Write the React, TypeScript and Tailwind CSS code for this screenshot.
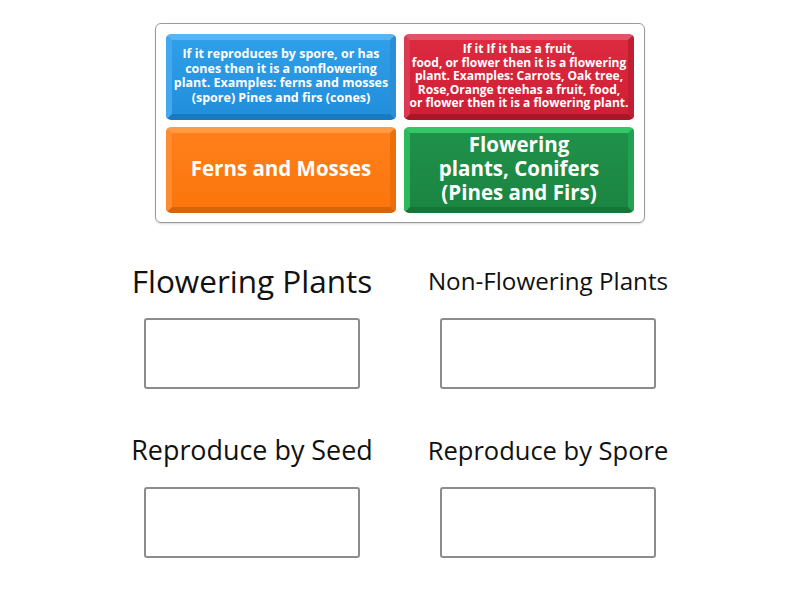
const tiles = [
  {
    lines: [
      "If it reproduces by spore, or has",
      "cones then it is a nonflowering",
      "plant. Examples: ferns and mosses",
      "(spore) Pines and firs (cones)",
    ],
    size: "text-[12.5px] leading-[14.5px] pb-[2px]",
    cls: "bg-gradient-to-b from-[#2f9fe9] to-[#228fdc] border-t-[#59b5f1] border-l-[#43a8ee] border-r-[#2b8fd8] border-b-[#1b79c2]",
  },
  {
    lines: [
      "If it If it has a fruit,",
      "food, or flower then it is a flowering",
      "plant. Examples: Carrots, Oak tree,",
      "Rose,Orange treehas a fruit, food,",
      "or flower then it is a flowering plant.",
    ],
    size: "text-[12px] leading-[13.6px] pb-[2px]",
    cls: "bg-gradient-to-b from-[#dc2a3f] to-[#cf1f35] border-t-[#e4526a] border-l-[#dc3a52] border-r-[#c11e33] border-b-[#a8162a]",
  },
  {
    lines: ["Ferns and Mosses"],
    size: "text-[20.5px] leading-[24px] pb-[4px]",
    cls: "bg-gradient-to-b from-[#ff7f1a] to-[#fb760c] border-t-[#ff9a45] border-l-[#ff8c30] border-r-[#ec6f0b] border-b-[#d8640a]",
  },
  {
    lines: ["Flowering", "plants, Conifers", "(Pines and Firs)"],
    size: "text-[20.5px] leading-[24px] pb-[5px]",
    cls: "bg-gradient-to-b from-[#1f914a] to-[#1b8542] border-t-[#34c766] border-l-[#2cb95c] border-r-[#22a152] border-b-[#167638]",
  },
];

function Tile({ t }: { t: (typeof tiles)[number] }) {
  return (
    <div
      className={`h-[86px] rounded-[5px] border-[6px] flex items-center justify-center text-center text-white font-bold overflow-visible ${t.cls}`}
    >
      <div className={`whitespace-nowrap flex flex-col items-center ${t.size}`}>
        {t.lines.map((l, i) => (
          <span key={i}>{l}</span>
        ))}
      </div>
    </div>
  );
}

function Target({ label, size }: { label: string; size: string }) {
  return (
    <div className="flex flex-col items-center">
      <div className={`h-[40px] flex items-center text-[#111] whitespace-nowrap ${size}`}>{label}</div>
      <div className="mt-[17px] w-[216px] h-[71px] border-2 border-[#8c8c8c] rounded-[3px] bg-white" />
    </div>
  );
}

export default function App() {
  return (
    <div className="w-[800px] h-[600px] bg-white flex flex-col items-center" style={{ fontFamily: '"Open Sans", sans-serif' }}>
      <div className="mt-[23px] w-[490px] h-[200px] border border-[#9a9a9a] rounded-[6px] p-[10px] grid grid-cols-2 gap-x-[8px] gap-y-[7px] shadow-[0_1px_2px_rgba(0,0,0,0.15)]">
        {tiles.map((t, i) => (
          <Tile key={i} t={t} />
        ))}
      </div>
      <div className="mt-[38px] grid grid-cols-[296px_296px] gap-y-[41px]">
        <Target label="Flowering Plants" size="text-[31.5px]" />
        <Target label="Non-Flowering Plants" size="text-[24.2px]" />
        <Target label="Reproduce by Seed" size="text-[26.9px]" />
        <Target label="Reproduce by Spore" size="text-[25.5px]" />
      </div>
    </div>
  );
}
